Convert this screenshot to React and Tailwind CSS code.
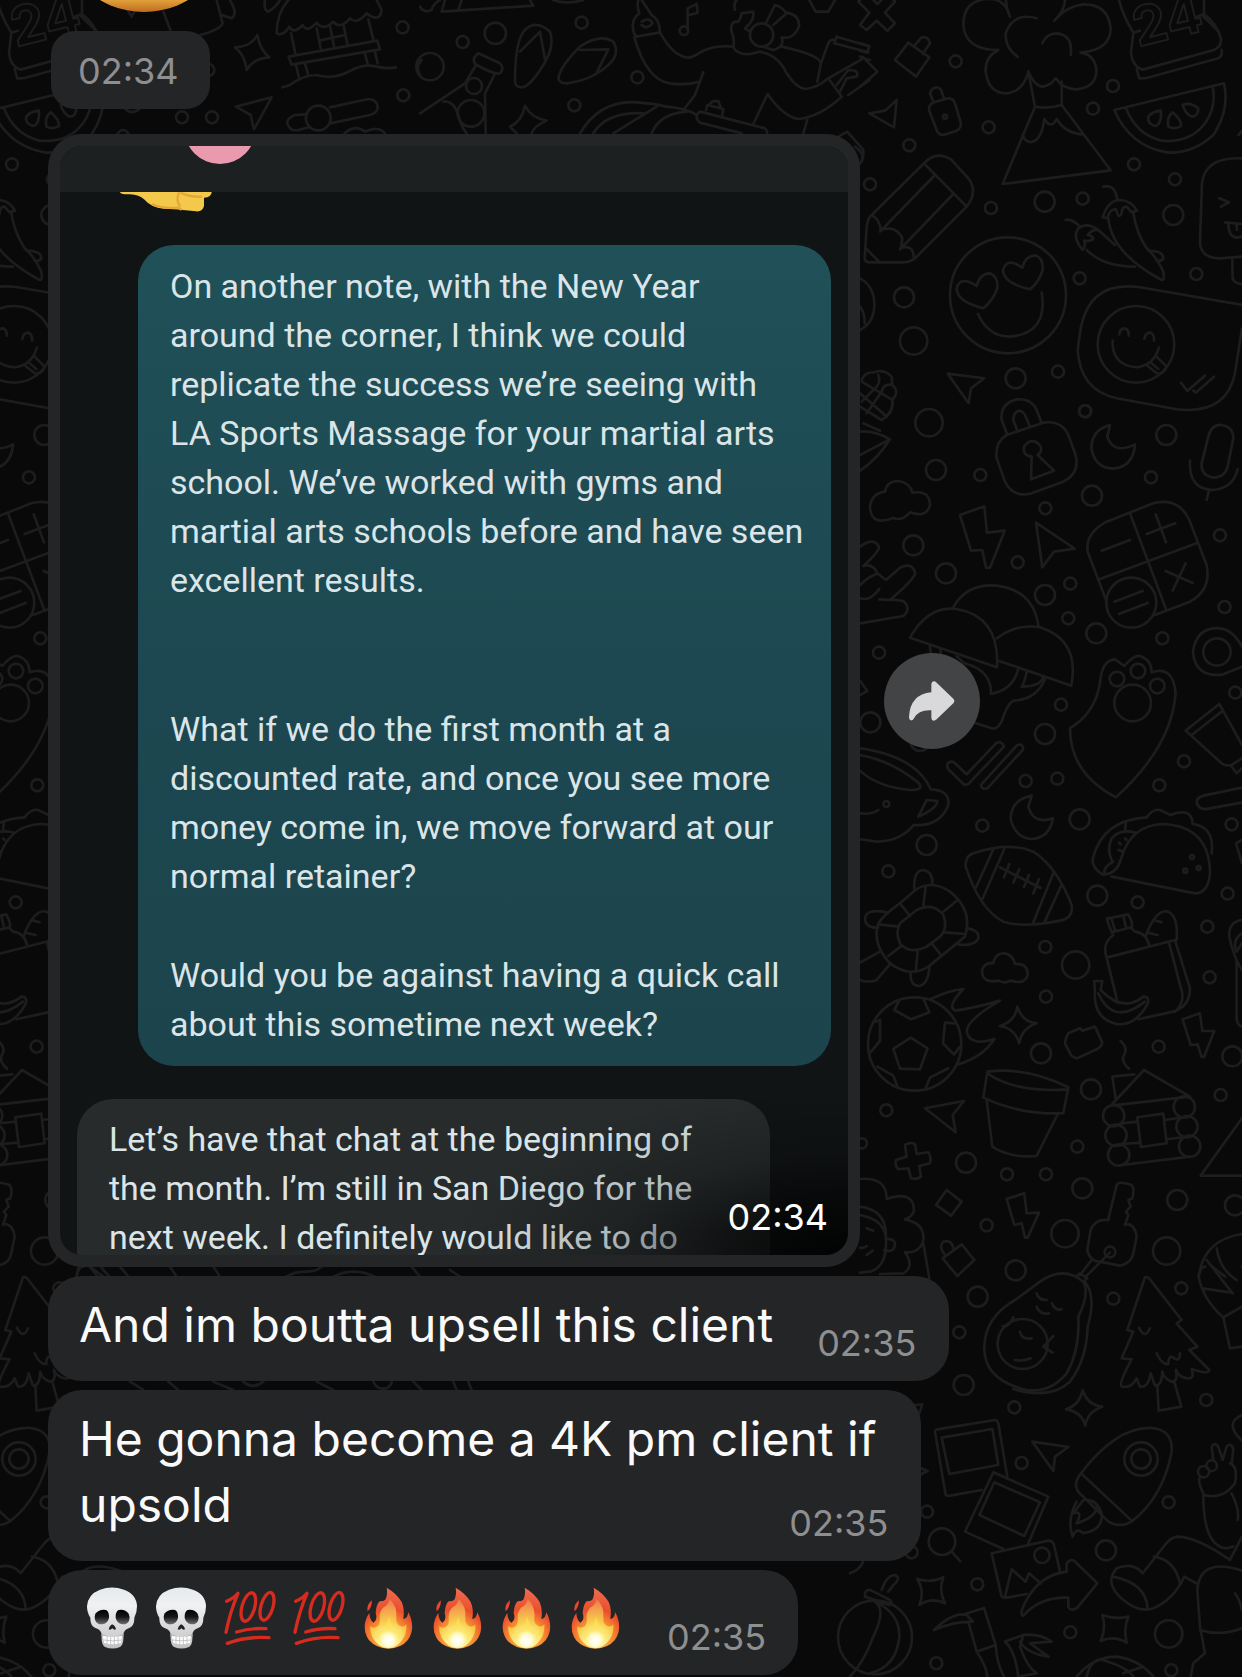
import { useId } from "react"

// Each block of doodles has its own origin and is drawn on a 3x grid.
const doodles = [
  {
    origin: "translate(0 0) scale(0.3333)",
    circles: [[1208, 82, 18], [546, 352, 18], [636, 352, 18], [1210, 286, 18], [625, 210, 18], [397, 308, 28], [955, 354, 37]],
    paths: [
      "M830 100Q830 40 865 0M830 100Q850 110 868 80Q880 105 908 75Q920 100 950 68Q970 95 1000 65Q1020 90 1050 55Q1070 75 1100 40Q1140 70 1145 30L1130 0",
      "M873 100L886 160M950 85L962 145M990 78L1002 138M1030 72L1042 132M1105 58L1120 118M957 122L1035 105M866 170L1132 122L1140 148L875 194zM888 195L897 232M915 190L925 225M1095 160L1104 195M1125 155L1133 190",
      "M848 262L870 255Q910 225 950 225Q1000 240 1050 213Q1090 190 1130 200Q1160 208 1188 202",
      "M772 105Q780 150 808 172Q760 175 740 210Q735 165 705 142Q755 140 772 105z",
      "M708 320L815 292L762 388L752 345z",
      "M990 322L1105 297Q1135 300 1133 325Q1130 340 1110 345L990 370M920 343L885 345Q860 355 862 370Q870 395 895 390L928 382",
      "M1030 405Q1060 370 1095 395Q1140 375 1158 405M350 405Q370 375 388 405M1265 180Q1245 200 1260 225",
      "M490 35L517 105M600 105Q660 90 668 70L650 0M665 45L695 55Q710 45 700 20L690 0M795 0Q790 30 805 35Q830 20 840 0M383 30L395 50L403 35M240 45L290 95",
    ],
  },
  {
    origin: "translate(420 0) scale(0.3333)",
    circles: [[128, 126, 18], [485, 68, 18], [652, 232, 18], [463, 316, 18], [226, 100, 32], [30, 200, 41], [162, 258, 24], [153, 340, 40], [1025, 105, 35], [792, 92, 13]],
    paths: [
      "M285 245Q285 110 320 85Q350 60 390 95Q405 140 370 195Q330 260 305 262Q288 262 285 245zM300 155L360 95L375 178",
      "M415 235Q420 200 480 140Q540 100 580 125Q600 160 570 190Q520 240 440 250Q418 250 415 235zM480 150L565 148L530 218",
      "M175 160L240 190Q255 205 240 220Q225 225 170 195Q150 180 175 160zM168 195L135 250L0 340M223 225L195 280L197 400M70 305Q100 300 115 345Q120 375 140 400",
      "M335 400Q340 380 380 362Q335 355 315 318Q305 365 270 380L290 400",
      "M480 400Q540 300 650 307Q700 310 740 320Q800 325 830 345M520 400Q560 335 670 340M710 320L580 400M695 400Q720 340 800 335",
      "M655 0Q650 20 658 40Q630 60 642 100L650 110L720 97Q720 60 695 45L665 0M665 65Q690 50 698 70Q680 90 665 75M643 112Q680 240 750 250Q800 257 837 245M720 97Q760 170 805 173Q820 172 850 152Q890 135 940 140M850 217L825 285L790 330",
      "M940 140Q950 165 990 162L1020 155Q1075 165 1100 220Q1130 265 1155 267Q1190 265 1225 235L1265 290Q1200 350 1135 357Q1090 350 1043 282L1000 372M1162 360L1150 400",
      "M940 140Q945 120 935 95Q930 70 945 65Q960 70 965 40L1000 35Q1005 60 975 85L990 95M945 30Q940 10 950 0M1085 140Q1200 165 1203 190L1192 245M1203 190L1225 130Q1232 115 1245 120",
      "M1345 138L1250 110L1243 130L1345 157M1225 235L1330 175L1350 180M1250 255L1285 210Q1320 210 1310 230L1280 235L1260 275M1285 285L1350 240M1040 65L1065 15Q1085 20 1100 40L1060 75M1100 38Q1140 45 1137 80Q1120 120 1085 112Q1095 140 1060 150L1030 140",
      "M803 90L803 25L830 12L833 38L808 45",
      "M965 400L840 368Q820 350 840 335L1035 385Q1045 395 1040 405M858 330L862 315L910 327L907 345M868 315Q875 300 895 303L902 322",
      "M1168 0L1187 35L1225 35L1245 0M1255 410L1282 395L1330 450Q1332 480 1320 490M0 20Q10 40 35 30Q40 10 60 0M75 0L65 35L340 17L330 0M125 0L115 30M400 0Q440 15 490 0",
    ],
  },
  {
    origin: "translate(860 0) scale(0.3333)",
    circles: [
      [287, 184, 18], [386, 382, 18], [148, 436, 18], [30, 553, 18], [759, 258, 18], [699, 326, 18], [822, 493, 18], [945, 538, 18], [668, 596, 18], [393, 624, 18],
      [659, 835, 18], [1009, 822, 18], [594, 1115, 18], [675, 1233, 18], [554, 605, 30], [940, 645, 30], [132, 892, 30], [467, 1135, 30], [161, 1023, 41],
      [444, 886, 174], [828, 1033, 115], [255, 350, 6],
    ],
    paths: [
      "M0 75L20 90L50 62L82 92L105 70L75 38L105 5L85 -20L52 12L20 -20L-5 5L28 38z",
      "M105 180L145 128L208 172L168 230zM165 135L185 112Q205 108 210 130L188 162",
      "M28 340L75 332L110 300L102 382z",
      "M222 307L265 295Q280 295 285 310L303 370Q303 385 290 392L250 405Q235 405 230 390L207 330Q207 312 222 307zM220 305L210 280Q215 262 232 262Q243 265 247 280L253 298",
      "M450 50Q435 -5 385 -3Q310 0 310 75Q315 150 415 150Q375 170 377 215Q385 280 440 280Q490 275 505 215Q525 260 548 260Q570 258 587 235Q610 268 650 268Q710 262 709 210Q705 165 662 158Q752 150 752 85Q745 12 670 13Q620 18 583 62Q615 30 615 0M438 0Q440 30 450 50",
      "M530 55Q460 35 437 100Q435 145 473 170M547 130Q560 100 590 100Q640 105 632 165",
      "M505 215L525 320Q560 328 605 315L605 245M525 320L428 552L752 511L605 315M488 405Q495 428 515 426Q545 420 553 357Q573 390 590 357Q615 400 672 404",
      "M777 0Q790 50 820 98L813 160Q818 200 848 209L1062 150Q1085 140 1083 115Q1070 70 1032 42L1032 0M830 207L838 235Q848 236 860 234L1075 175Q1088 168 1085 150M820 98L840 92M1010 50L1032 42",
      "M763 330L1092 250Q1110 330 1060 405Q1000 460 925 458Q810 440 763 330zM798 325Q830 405 905 422Q990 430 1035 370Q1070 320 1058 260",
      "M903 332Q905 375 885 378Q860 370 865 350Q875 335 903 332zM938 337Q965 360 963 378Q945 390 925 380Q920 350 938 337zM968 315Q990 305 1015 325Q1015 350 995 350Q975 340 968 315z",
      "M1146 475Q1035 470 1026 550L1020 730Q1025 775 1080 775L1146 770M1117 775L1118 835Q1122 850 1146 852M1078 595L1107 607L1083 620M1095 667L1146 672M1105 670Q1105 710 1130 713L1146 710M1130 675L1131 690",
      "M730 560Q765 550 772 600M728 652Q745 600 780 600Q815 602 831 632L815 637L800 620Q785 620 785 640Q775 660 768 628Q750 625 742 655zM745 655Q755 760 905 840Q915 840 910 815Q890 770 860 745Q830 700 820 640",
      "M617 660Q635 655 660 680M715 690Q680 665 655 685Q635 710 668 750Q680 735 672 722Q695 725 700 715Q695 705 683 705Q695 688 715 690zM680 750Q730 800 825 800M715 690L765 735M865 752Q910 752 910 775Q905 785 890 782",
      "M192 490Q230 450 275 480L325 535Q355 575 320 620L165 775Q150 787 130 787L25 787Q14 785 14 775L20 680Q25 650 35 645zM192 490L320 620M225 525L60 695M280 582L120 748M35 645Q60 660 62 690Q110 675 127 715Q125 735 122 745Q160 730 162 775M18 745L57 785",
      "M350 858Q360 820 390 820Q415 830 412 865Q400 900 370 925Q290 905 290 865Q300 825 350 858zM487 803Q495 768 525 766Q550 772 548 810Q535 850 510 868Q430 850 429 810Q440 770 487 803zM354 942Q385 1010 450 1010Q565 1000 545 878",
      "M1146 915L840 862Q690 840 662 985L653 1050Q660 1170 770 1195L950 1228Q1100 1245 1125 1120L1146 985",
      "M778 1003Q780 985 795 985Q808 990 806 1007M853 1017Q855 998 872 998Q884 1005 882 1022M758 1022Q755 1095 828 1102Q880 1098 897 1043M862 1097L890 1120Q910 1125 920 1100L888 1068M875 1090L895 1107M963 1148L982 1173L1035 1127M1000 1172L1008 1178L1062 1130",
      "M263 1121L373 1135L333 1165L326 1210z",
      "M5 1140Q15 1115 40 1118Q70 1105 95 1130L97 1155Q120 1175 97 1200Q100 1230 80 1250M5 1145L97 1200M55 1125Q65 1150 40 1170L5 1205M0 1180L80 1250M97 1155Q70 1150 65 1175L20 1240",
      "M0 835Q45 860 43 920Q40 970 0 990M0 920Q15 940 14 970M0 170L10 172L52 215L0 260M0 130L28 138L22 158L0 152M-15 440Q20 465 0 490",
    ],
  },
  {
    origin: "translate(850 400) scale(0.3333)",
    circles: [
      [706, 34, 18], [391, 225, 18], [903, 232, 18], [586, 325, 18], [503, 487, 18], [661, 551, 18], [655, 655, 18], [1110, 406, 18], [1124, 621, 18], [937, 715, 18],
      [87, 758, 18], [633, 914, 18], [1156, 878, 18], [1002, 1084, 18], [622, 1136, 18], [527, 1143, 18], [928, 1156, 18], [949, 105, 30], [258, 210, 30], [726, 287, 30],
      [190, 436, 30], [288, 520, 30], [585, 585, 30], [739, 700, 30], [585, 1002, 30], [61, 967, 30], [210, 1025, 28], [237, 68, 41], [1101, 756, 41], [844, 608, 75],
      [801, 837, 22], [864, 813, 22], [922, 858, 22], [848, 909, 55], [109, 1212, 9],
    ],
    paths: [
      "M470 105L580 68Q635 60 655 105L677 165Q690 220 640 245L545 280Q490 295 465 245L440 175Q435 125 470 105zM470 100L455 60Q450 10 500 -2Q545 -5 560 30L575 68M502 92L490 60Q490 35 510 32Q520 35 525 45L540 80",
      "M545 170Q515 165 523 138Q545 110 570 135Q580 155 563 165L612 212L543 238z",
      "M780 75Q725 90 724 145Q735 205 790 206Q850 200 855 133Q790 165 772 110z",
      "M1075 110Q1085 72 1115 75Q1150 80 1150 115L1133 200Q1125 232 1090 233Q1052 225 1055 190zM1020 182Q1015 268 1090 270Q1150 265 1163 208M1077 272L1070 300",
      "M105 275Q110 243 145 243Q180 248 187 278Q240 270 240 315Q230 355 180 337Q155 365 130 354Q62 380 60 320Q65 280 105 275z",
      "M330 345L403 319L411 398L464 392L420 503L408 503L397 450L363 452zM558 368L674 446L612 455L577 502z",
      "M770 365L910 310Q985 290 1018 360L1070 495Q1085 570 1020 605L915 645M770 605L713 455Q705 400 770 365M840 340L947 625M1040 430L748 538M755 452L840 420M917 343L948 427M890 402L976 370M947 513L1028 549M1007 490L968 572M793 605L878 573M807 642L893 609",
      "M30 440Q70 410 87 440Q88 455 40 498Q70 490 82 520L108 540L150 503Q185 485 196 520Q190 540 122 598L160 603Q185 625 160 648L30 670M30 555Q55 530 80 522M88 567Q60 605 30 595M88 598L122 600",
      "M180 713Q235 615 320 627Q450 650 441 802zM310 622Q350 550 440 557Q550 570 566 680M441 715Q500 670 570 682Q690 720 664 857L447 783M240 740L242 758M272 750L272 765",
      "M320 768L342 790Q425 810 423 882Q490 870 505 806M530 815Q525 845 515 860Q570 860 580 832M586 835Q560 900 490 902Q470 915 455 965Q440 990 425 985L372 968",
      "M660 985Q735 940 750 850Q755 780 795 778L823 798Q850 765 870 768Q905 780 905 817Q970 795 977 880Q965 1040 798 1192Q660 1120 660 985z",
      "M1176 800L1120 823Q1035 835 1029 755Q1040 680 1110 685Q1150 690 1176 740M1007 992L1108 912L1176 1035M1115 935L1028 1003M1007 992L1115 1090Q1130 1100 1145 1095L1176 1075M1143 1097L1160 1120L1176 1105M1176 1163L1060 1187Q1035 1195 1042 1213Q1052 1232 1075 1226L1176 1208",
      "M293 1090Q305 1080 315 1090L350 1123L438 1030Q455 1020 462 1040L355 1152Q345 1158 338 1150L295 1108Q290 1098 293 1090zM397 1150L502 1035Q520 1030 520 1048L412 1165Q395 1170 393 1155z",
      "M30 1045Q200 1070 242 1168Q300 1170 295 1215Q270 1280 192 1275Q150 1325 80 1325L30 1318M30 1065Q120 1080 205 1148Q225 1170 180 1170Q80 1160 30 1112M230 1200L262 1203Q262 1225 205 1250Q215 1230 230 1200zM30 1240Q65 1245 85 1230",
      "M545 1187Q482 1200 482 1258Q500 1320 550 1317Q600 1310 609 1255Q550 1275 535 1220zM30 842L52 873L30 885M30 95Q70 90 120 118Q80 180 30 212M30 165L120 118M30 20L95 60Q130 40 128 0M40 70L90 92",
    ],
  },
  {
    origin: "translate(850 800) scale(0.3333)",
    circles: [
      [397, 77, 18], [115, 214, 18], [586, 441, 18], [863, 307, 18], [1145, 73, 18], [1133, 281, 18], [1072, 380, 18], [1079, 532, 18], [588, 590, 18], [926, 740, 18],
      [1112, 885, 18], [109, 931, 18], [682, 1040, 18], [471, 1123, 18], [588, 1123, 18], [36, 1030, 15], [230, 135, 30], [689, 58, 30], [742, 287, 30], [573, 760, 30],
      [723, 868, 30], [1147, 769, 30], [348, 1088, 30], [697, 1165, 30], [982, 1200, 30], [1155, 1216, 30], [677, 495, 41], [194, 732, 140],
      [791, 947, 32], [798, 1006, 32], [806, 1065, 32], [1003, 921, 32], [1011, 980, 32], [1019, 1039, 32], [1026, 171, 6], [1006, 212, 6], [1046, 204, 6],
    ],
    paths: [
      "M375 158Q480 125 550 155Q620 200 665 315Q670 355 630 362Q520 385 460 365Q390 330 347 200Q345 165 375 158zM430 148L378 262M463 147L397 298M610 220L548 372M633 258L583 368M450 202L572 264M478 192L462 232M508 208L490 248M537 225L522 262M567 238L550 280",
      "M760 225Q720 200 730 170Q760 60 890 52Q910 25 930 30L962 45Q1025 20 1028 72Q1095 80 1085 160M785 230L1035 280Q1075 280 1080 220Q1080 80 940 72Q840 75 812 180Q800 220 765 223Q755 205 790 185M828 65L825 90M785 180Q770 150 785 115Q810 85 858 98M805 150L815 153M808 128L812 133M825 115L830 120",
      "M150 310L190 275Q240 235 300 275Q370 330 345 410L235 500Q180 535 120 490Q65 430 85 370Q105 340 150 310zM150 370L200 330Q250 305 280 345Q295 385 270 410L230 440Q180 465 150 430Q135 395 150 370z",
      "M227 258L220 320M150 310L180 348M320 302L280 335M85 373L147 380M283 397L345 402M115 468L155 437M203 455L197 515M245 430L275 468M193 265Q190 212 220 210Q250 215 247 255M110 337Q50 325 45 355Q45 385 85 383M350 385Q390 390 385 415Q375 440 325 433M182 520Q180 558 208 558Q235 550 238 502M90 455L30 488M122 490L80 540Q55 550 30 540",
      "M430 490Q435 458 465 460Q490 465 495 492Q535 490 533 525Q525 555 482 542Q465 552 445 542Q395 552 396 510Q405 485 430 490z",
      "M770 473L975 420L1020 565Q1020 620 970 635L865 658M770 473L803 608M957 428L997 580Q1000 615 975 635M770 473Q755 430 790 405L785 395Q765 350 775 355L835 343Q850 370 845 382L785 397M845 385L855 395Q890 400 897 435M888 405Q920 325 955 335Q985 350 980 420M917 362L935 367M893 398L923 405M785 358L795 390M820 348L828 382",
      "M733 543L757 543L752 570Q820 640 880 590Q900 590 893 612Q855 680 800 672Q730 655 735 580zM745 580Q790 680 885 605",
      "M1176 360Q1135 365 1138 410Q1150 470 1176 510M1160 480L1160 660Q1165 678 1176 680M1176 400Q1145 420 1160 455L1176 430M1176 190L1158 130L1176 120",
      "M130 747L182 713L233 745L210 808L150 806zM147 603L133 630L183 658L238 637L222 600M90 660L90 722L62 757M75 665L90 660M315 670L285 668L279 730L312 764L330 740M82 800L130 827L143 862M295 805L240 833L228 862M240 598Q300 570 340 567Q290 620 315 632Q370 625 450 602Q350 660 350 695Q360 740 433 717Q400 770 325 793",
      "M502 620Q515 665 560 670Q515 685 508 730Q495 685 450 678Q495 665 502 620zM648 715L655 700L690 685L697 692L735 680L757 728Q755 740 740 748L682 775Q668 772 663 765L645 730zM812 723Q835 745 822 765Q812 785 837 806M998 658L1050 640L1057 693L1093 693L1062 771L1055 771L1043 733L1022 735z",
      "M412 815Q530 800 655 862L640 940Q510 945 400 893zM412 820Q500 880 655 868M410 900L427 1040Q480 1075 560 1068L622 945",
      "M787 912L882 810L1020 890L790 916M797 895L787 830L853 823M815 970L862 965M820 1032L870 1028M943 960L1000 952M950 1018L1000 1012M862 952L940 941L950 1030L873 1041zM810 1096L1020 1070",
      "M225 925L342 903L308 945L317 997zM165 1035Q180 1025 195 1032L200 1062L235 1057Q245 1070 240 1090L208 1098L213 1130Q200 1140 183 1135L175 1105L145 1108Q133 1095 138 1080L170 1070zM290 1170L335 1205L303 1247L258 1215zM470 1197L523 1180L530 1240L567 1238L533 1313L525 1313L515 1270L493 1275zM1176 955L1052 1127L1176 1127",
      "M775 1258L800 1155Q805 1142 845 1155Q855 1165 847 1195L835 1200L842 1220L828 1235L835 1245L825 1275M30 1137Q110 1130 110 1197Q190 1170 192 1230Q190 1250 165 1258",
    ],
  },
  {
    origin: "translate(850 1200) scale(0.3333)",
    circles: [
      [410, 76, 18], [328, 397, 18], [790, 296, 18], [994, 265, 18], [1069, 600, 18], [493, 622, 18], [515, 789, 18], [231, 935, 18], [185, 1057, 18], [382, 1153, 18],
      [956, 907, 18], [661, 1297, 18], [259, 1390, 18], [964, 1411, 18], [497, 211, 30], [383, 290, 30], [341, 555, 30], [768, 1051, 30], [645, 101, 41], [950, 153, 41],
      [956, 1302, 41], [518, 432, 75], [780, 156, 16], [576, 1066, 23], [873, 777, 50], [873, 777, 29], [276, 1025, 40], [1085, 797, 16], [1061, 815, 17], [75, 1312, 111],
    ],
    paths: [
      "M165 58Q225 70 220 120Q210 160 165 157Q195 200 160 220L90 222M220 130L238 235M30 20Q110 30 108 110M30 45Q110 60 108 125Q110 200 60 215L30 218M108 118Q135 115 135 135Q130 160 103 150M50 85L70 92M68 152L50 165M30 143Q45 145 50 138",
      "M278 175L335 133L373 180L322 228zM285 165Q265 140 280 125Q305 118 310 145",
      "M570 245Q640 195 700 245Q720 280 685 350Q690 450 650 520Q600 580 530 570Q400 540 403 440Q405 350 500 297zM705 245Q740 290 713 380Q710 480 660 545Q600 600 490 567",
      "M560 280Q565 300 590 300M606 310Q615 333 635 328M560 320Q570 345 597 340M495 480Q520 485 542 475M510 395Q515 420 545 415M458 378Q475 385 490 352M610 408L580 440L608 458",
      "M775 60Q735 55 722 90L712 150Q720 185 750 185L810 197Q845 190 850 160L860 110Q855 70 825 72M725 180L690 225M780 158L705 232M678 230L690 220L712 235L700 245",
      "M885 232Q895 228 905 245L995 360L980 370L1042 440L1018 450L1078 510Q1075 525 1025 507Q1035 540 1010 535Q985 530 978 510Q985 545 965 545Q940 535 937 515Q935 560 915 557L902 520Q895 565 870 560L860 535Q845 565 815 560Q805 550 845 478L815 475L850 395L832 390zM867 383Q885 420 900 385M920 460Q935 495 955 492Q955 470 965 470Q990 490 990 460M922 555L926 632L994 620L973 545",
      "M1176 102Q1060 120 1046 230Q1060 300 1120 352L1176 320M1070 180L1148 280M1058 265L1145 278M1100 145Q1110 210 1160 240M1120 352L1140 445L1176 440M1176 645Q1120 670 1176 722",
      "M698 570Q712 615 757 620Q712 635 706 677Q695 635 648 628Q690 615 698 570zM547 725L655 741L615 770L610 813z",
      "M395 870L300 887Q290 888 287 885L255 695Q255 690 262 688L435 660Q442 660 445 670L472 830M275 713L427 687L445 795L298 822zM460 1047L345 995L430 817L595 890L535 1030M433 847L570 907L523 1008L388 945z",
      "M530 1182L470 1193Q460 1195 455 1190L425 1060L595 1022Q608 1022 612 1035L630 1115M465 1190L485 1108L527 1145L537 1120L572 1150M650 1115L650 1090Q665 1070 680 1090L742 1150L680 1225Q660 1235 655 1220L655 1193Q570 1190 520 1247Q505 1245 530 1200Q570 1125 650 1115z",
      "M693 820Q800 680 905 684Q970 690 965 755Q940 890 845 965Q810 985 775 965L700 890Q660 860 693 820zM693 820L845 962M680 905Q650 960 668 1010Q680 980 700 1000Q760 990 755 940Q740 895 700 900L670 940Q700 930 680 970Q740 950 740 920M305 1055L331 1084",
      "M1176 1010L1140 1080Q1040 1010 980 1010Q960 1015 945 1035L878 1120Q850 1085 800 1105Q760 1150 820 1200Q870 1240 910 1225Q970 1200 1003 1130L1042 1152M912 1070Q975 1080 990 1150M790 1130Q890 1150 893 1228M1176 1112Q1050 1070 1042 1170L1050 1280L1065 1360L1030 1390L1022 1430M1050 1290Q1110 1310 1176 1285M1155 1180Q1170 1200 1176 1230",
      "M1060 880Q1040 840 1052 830M1062 885Q1120 900 1155 850Q1165 800 1140 790M1090 780L1085 740Q1095 725 1105 740L1118 780L1130 740Q1145 725 1150 750L1145 790M1060 885Q1060 1040 1130 1045L1150 1040M1145 880Q1170 930 1163 960",
      "M202 1137Q245 1150 280 1132Q265 1170 285 1210Q245 1190 208 1215Q225 1175 202 1137zM757 1245Q800 1260 835 1250Q820 1285 830 1328Q790 1305 752 1323Q770 1285 757 1245z",
      "M45 1180Q50 1165 65 1172L120 1200Q130 1212 118 1215L45 1190zM95 1170Q110 1125 135 1125Q155 1135 130 1155L115 1175M75 1205Q110 1230 70 1310Q40 1390 0 1430M75 1205Q150 1240 148 1310Q140 1400 60 1420",
      "M252 1290Q310 1235 350 1245L368 1265Q310 1265 252 1290zM345 1242L402 1224L437 1335L380 1355L355 1265M437 1335Q440 1390 462 1430M380 1355Q410 1400 412 1430M465 1325L520 1305L510 1340Q530 1400 560 1420L505 1430Q495 1350 465 1325M520 1305Q570 1300 605 1325L540 1330L595 1370Q530 1360 510 1325",
      "M680 1430Q730 1370 800 1370Q870 1380 910 1430M710 1430Q720 1385 750 1378Q830 1400 850 1430M820 1420L880 1400M213 805L233 813L213 823M195 615L217 613L208 640M0 1120Q30 1110 40 1083",
    ],
  },
  {
    origin: "translate(40 1080) scale(0.3333)",
    circles: [],
    paths: [
      "M110 590Q115 560 130 560M150 560L190 590M240 560L265 590M390 560L410 590M520 560L540 590M740 590Q760 575 800 575Q830 575 845 560M880 590Q940 560 1005 590M1115 560L1140 590M1230 570L1260 590",
      "M270 905L310 930M385 905L415 930M520 905L580 930M830 905L880 930M1120 905L1145 930M1240 905L1250 930M1285 905L1295 930M1000 905Q1010 930 1040 925Q1055 915 1055 905M610 905Q640 930 670 905",
    ],
  },
]

const TILE_WIDTH = 1122

const Wallpaper = () => (
  <svg className="absolute inset-0 h-full w-full" aria-hidden="true" fill="none" stroke="#1d1d1d" strokeWidth="8" strokeLinecap="round" strokeLinejoin="round">
    <defs>
      <g id="doodles">
        {doodles.map((block) => (
          <g key={block.origin} transform={block.origin}>
            {block.circles.map(([cx, cy, r]) => (
              <circle key={`${cx}-${cy}-${r}`} cx={cx} cy={cy} r={r} />
            ))}
            {block.paths.map((d) => (
              <path key={d} d={d} />
            ))}
          </g>
        ))}
        <text x="1138" y="47" transform="rotate(-14 1138 47)" strokeWidth="2" className="font-['Inter'] text-[54px] font-bold">
          24
        </text>
      </g>
    </defs>
    <use href="#doodles" />
    <use href="#doodles" x={-TILE_WIDTH} />
    <use href="#doodles" x={TILE_WIDTH} />
  </svg>
)

const Skull = () => {
  const id = useId()
  return (
    <svg viewBox="0 0 156 186" className="h-[62px] w-[52px]" role="img" aria-label="skull">
      <defs>
        <linearGradient id={`${id}b`} x1="0" y1="0" x2="0" y2="1">
          <stop offset="0" stopColor="#e6eaee" />
          <stop offset="0.3" stopColor="#f0f1f3" />
          <stop offset="0.6" stopColor="#dcdcde" />
          <stop offset="1" stopColor="#c2c1c2" />
        </linearGradient>
        <linearGradient id={`${id}e`} x1="0" y1="0" x2="0" y2="1">
          <stop offset="0" stopColor="#000" />
          <stop offset="0.5" stopColor="#171717" />
          <stop offset="1" stopColor="#707070" />
        </linearGradient>
      </defs>
      <path fill={`url(#${id}b)`} d="M3 58Q5 22 42 8Q78 -5 114 8Q152 22 153 58Q153 78 145 92Q146 118 128 124Q113 128 112 145Q114 172 102 180Q80 189 57 180Q45 172 47 145Q46 128 30 124Q12 118 13 92Q3 78 3 58z" />
      <path fill="#b3b2b4" d="M46 140Q80 158 113 140L112 150L47 150z" />
      <path fill={`url(#${id}e)`} d="M28 80Q40 66 60 69Q70 74 69 92Q66 108 50 112Q32 113 27 98Q25 88 28 80z" />
      <path fill={`url(#${id}e)`} d="M128 80Q118 66 98 69Q88 74 89 92Q92 108 108 112Q126 113 130 98Q132 88 128 80z" />
      <path fill="#241f20" d="M78 112Q88 116 90 127Q84 130 79 124Q74 130 68 127Q70 116 78 112z" />
      <path fill="#fdfdfd" d="M50 146Q79 152 108 146L105 168Q80 176 55 168z" />
      <path stroke="#b0afb1" strokeWidth="2" fill="none" d="M52 159Q80 164 107 159M63 148V171M74 149V173M85 149V173M96 148V171" />
    </svg>
  )
}

const Hundred = () => (
  <svg viewBox="0 0 156 186" className="h-[62px] w-[52px]" role="img" aria-label="hundred points" fill="none" stroke="#d62b1f" strokeWidth="10" strokeLinecap="round" strokeLinejoin="round">
    <path d="M8 43Q32 32 42 19Q18 75 6 136" />
    <ellipse cx="73" cy="60" rx="19" ry="44" transform="rotate(16 73 60)" />
    <ellipse cx="129" cy="58" rx="18" ry="43" transform="rotate(16 129 58)" />
    <path d="M38 135Q80 122 126 125M10 169Q70 147 135 152" />
  </svg>
)

const Fire = () => {
  const id = useId()
  return (
    <svg viewBox="-5 0 156 186" className="h-[62px] w-[52px]" role="img" aria-label="fire">
      <defs>
        <radialGradient id={`${id}o`} gradientUnits="userSpaceOnUse" cx="74" cy="150" r="140">
          <stop offset="0.1" stopColor="#fbd44b" />
          <stop offset="0.4" stopColor="#f5822f" />
          <stop offset="0.6" stopColor="#ea4e2c" />
          <stop offset="1" stopColor="#ee6a4e" />
        </radialGradient>
        <radialGradient id={`${id}i`} gradientUnits="userSpaceOnUse" cx="74" cy="162" r="125">
          <stop offset="0" stopColor="#fffff0" />
          <stop offset="0.2" stopColor="#fdf6a0" />
          <stop offset="0.45" stopColor="#f9cf4c" />
          <stop offset="0.8" stopColor="#f29a4d" />
          <stop offset="1" stopColor="#ee7a4b" />
        </radialGradient>
        <radialGradient id={`${id}c`} gradientUnits="userSpaceOnUse" cx="74" cy="160" r="34">
          <stop offset="0" stopColor="#ffffff" />
          <stop offset="0.45" stopColor="#fffde0" />
          <stop offset="1" stopColor="#fff9a0" stopOpacity="0" />
        </radialGradient>
      </defs>
      <path fill={`url(#${id}o)`} d="M69 2Q100 20 114 45Q124 68 119 96Q131 96 134 76Q150 106 144 134Q140 146 138 150L132 160Q112 184 74 185Q38 184 16 160L10 150Q2 134 3 118Q4 96 17 78Q18 99 29 107Q43 97 36 78Q38 52 48 43Q60 43 65 38Q73 22 69 2z" />
      <path fill="#e9472f" d="M25 40Q10 50 11 72Q24 66 25 40z" />
      <path fill={`url(#${id}i)`} d="M78 36Q102 60 98 92Q96 112 112 118Q124 120 128 112Q130 140 116 158Q100 182 74 182Q46 182 32 160Q18 140 20 118Q30 126 42 118Q50 110 48 92Q48 72 58 62Q74 56 78 36z" />
      <path fill="#fbe35c" opacity="0.6" d="M76 88Q84 110 90 126Q104 134 114 128Q110 178 74 181Q40 178 36 132Q50 136 60 124Q72 110 76 88z" />
      <ellipse cx="74" cy="158" rx="34" ry="26" fill={`url(#${id}c)`} />
    </svg>
  )
}

const emojis = { skull: Skull, hundred: Hundred, fire: Fire }

const Time = ({ children, className = "text-[#8e8f90]" }) => (
  <time className={`shrink-0 text-4xl leading-[42px] ${className}`}>{children}</time>
)

const Message = ({ time, lines }) => {
  const last = lines.length - 1
  return (
    <article className="rounded-[34px] bg-[#242527] pt-4 pr-[33px] pb-[17px] pl-[31px]">
      {lines.slice(0, last).map((line) => (
        <p key={line} className="pr-3 text-5xl leading-[66px] text-[#fafafa]">
          {line}
        </p>
      ))}
      <div className="flex items-end justify-between gap-11">
        <p className="pb-[6px] text-5xl leading-[66px] text-[#fafafa]">{lines[last]}</p>
        <Time>{time}</Time>
      </div>
    </article>
  )
}

const EmojiMessage = ({ time, items }) => (
  <article className="flex items-end gap-[46px] rounded-[34px] bg-[#242527] pt-[17px] pr-8 pb-[17px] pl-[38px]">
    <div className="flex gap-[17px] pb-[9px]">
      {items.map((name, i) => {
        const Emoji = emojis[name]
        return <Emoji key={i} />
      })}
    </div>
    <Time>{time}</Time>
  </article>
)

const pitch = [
  "On another note, with the New Year\naround the corner, I think we could\nreplicate the success we’re seeing with\nLA Sports Massage for your martial arts\nschool. We’ve worked with gyms and\nmartial arts schools before and have seen\nexcellent results.",
  "What if we do the first month at a\ndiscounted rate, and once you see more\nmoney come in, we move forward at our\nnormal retainer?",
  "Would you be against having a quick call\nabout this sometime next week?",
]

const reply = "Let’s have that chat at the beginning of\nthe month. I’m still in San Diego for the\nnext week. I definitely would like to do"

const SharedScreenshot = () => (
  <article className="relative min-w-0 max-w-[812px] flex-1 rounded-[34px] border-12 border-[#242527] bg-[#111415]">
    <div className="h-[1109px] overflow-hidden rounded-[22px] font-['Roboto',sans-serif] text-[34px] leading-[49px] whitespace-pre text-[#dbe5e8]">
      <div className="h-[46px] bg-[#1d2021] pl-32">
        <svg viewBox="0 0 64 18" className="h-[18px] w-16" aria-hidden="true">
          <circle cx="32" cy="-18" r="36" fill="#e99aae" />
        </svg>
      </div>
      <div className="h-[53px] pl-[60px]">
        <svg viewBox="0 0 276 60" className="h-5 w-[92px]" aria-hidden="true">
          <path fill="#f4c84a" d="M0 0H275Q275 16 252 17V42Q248 60 228 58L165 52L130 50Q95 48 72 22Q58 8 30 7Q0 8 0 0z" />
          <path fill="none" stroke="#e5a836" strokeWidth="7" d="M95 36Q120 48 165 48Q178 44 185 54M178 0Q166 22 180 44M182 2Q210 16 246 14" />
        </svg>
      </div>
      <div className="mr-[17px] ml-[78px] space-y-[50px] rounded-[36px] bg-linear-to-b from-[#205058] via-[#1d4851] to-[#1c444c] pt-[17px] pb-[17px] pl-8">
        <p className="pb-[50px]">{pitch[0]}</p>
        <p>{pitch[1]}</p>
        <p>{pitch[2]}</p>
      </div>
      <div className="mt-[33px] mr-[78px] ml-[17px] rounded-t-[36px] bg-[#272b2c] pt-4 pl-8">
        <p>{reply}</p>
      </div>
    </div>
    <div className="absolute inset-0 rounded-[22px] bg-[radial-gradient(ellipse_400px_170px_at_100%_100%,#000000e6_0%,#00000099_30%,#00000033_60%,transparent)]" />
    <Time className="absolute right-5 bottom-[17px] text-white">02:34</Time>
  </article>
)

const App = () => (
  <main className="relative min-h-screen overflow-hidden bg-[#090909] font-['Inter',sans-serif]">
    <Wallpaper />
    <div className="relative flex flex-col items-start gap-[9px] px-12">
      <div className="mb-4 ml-[3px]">
        <svg viewBox="0 0 90 12" className="ml-12 h-3 w-[90px]" role="img" aria-label="emoji">
          <defs>
            <linearGradient id="face" x1="0" y1="0" x2="0" y2="1">
              <stop offset="0.93" stopColor="#e3a13a" />
              <stop offset="1" stopColor="#bd6d20" />
            </linearGradient>
          </defs>
          <circle cx="45" cy="-75" r="87" fill="url(#face)" />
        </svg>
        <article className="mt-[19px] flex h-[78px] items-center rounded-3xl bg-[#242527] pt-[2px] pr-[31px] pl-[27px]">
          <Time>02:34</Time>
        </article>
      </div>
      <div className="flex w-full items-center gap-6">
        <SharedScreenshot />
        <button type="button" aria-label="Forward" className="flex size-24 shrink-0 items-center justify-center rounded-full bg-[#434446]">
          <svg viewBox="0 0 138 120" className="h-10 w-[46px]" fill="#d9d9db" aria-hidden="true">
            <path d="M67 34V9Q68 0 76 1Q80 2 83 5L133 53Q139 60 133 67L83 115Q79 119 74 119Q67 118 67 110V88Q28 86 15 112Q12 119 6 118Q0 117 0 107Q4 40 67 34z" />
          </svg>
        </button>
      </div>
      <Message time="02:35" lines={["And im boutta upsell this client"]} />
      <Message time="02:35" lines={["He gonna become a 4K pm client if", "upsold"]} />
      <EmojiMessage time="02:35" items={["skull", "skull", "hundred", "hundred", "fire", "fire", "fire", "fire"]} />
    </div>
  </main>
)

export default App
